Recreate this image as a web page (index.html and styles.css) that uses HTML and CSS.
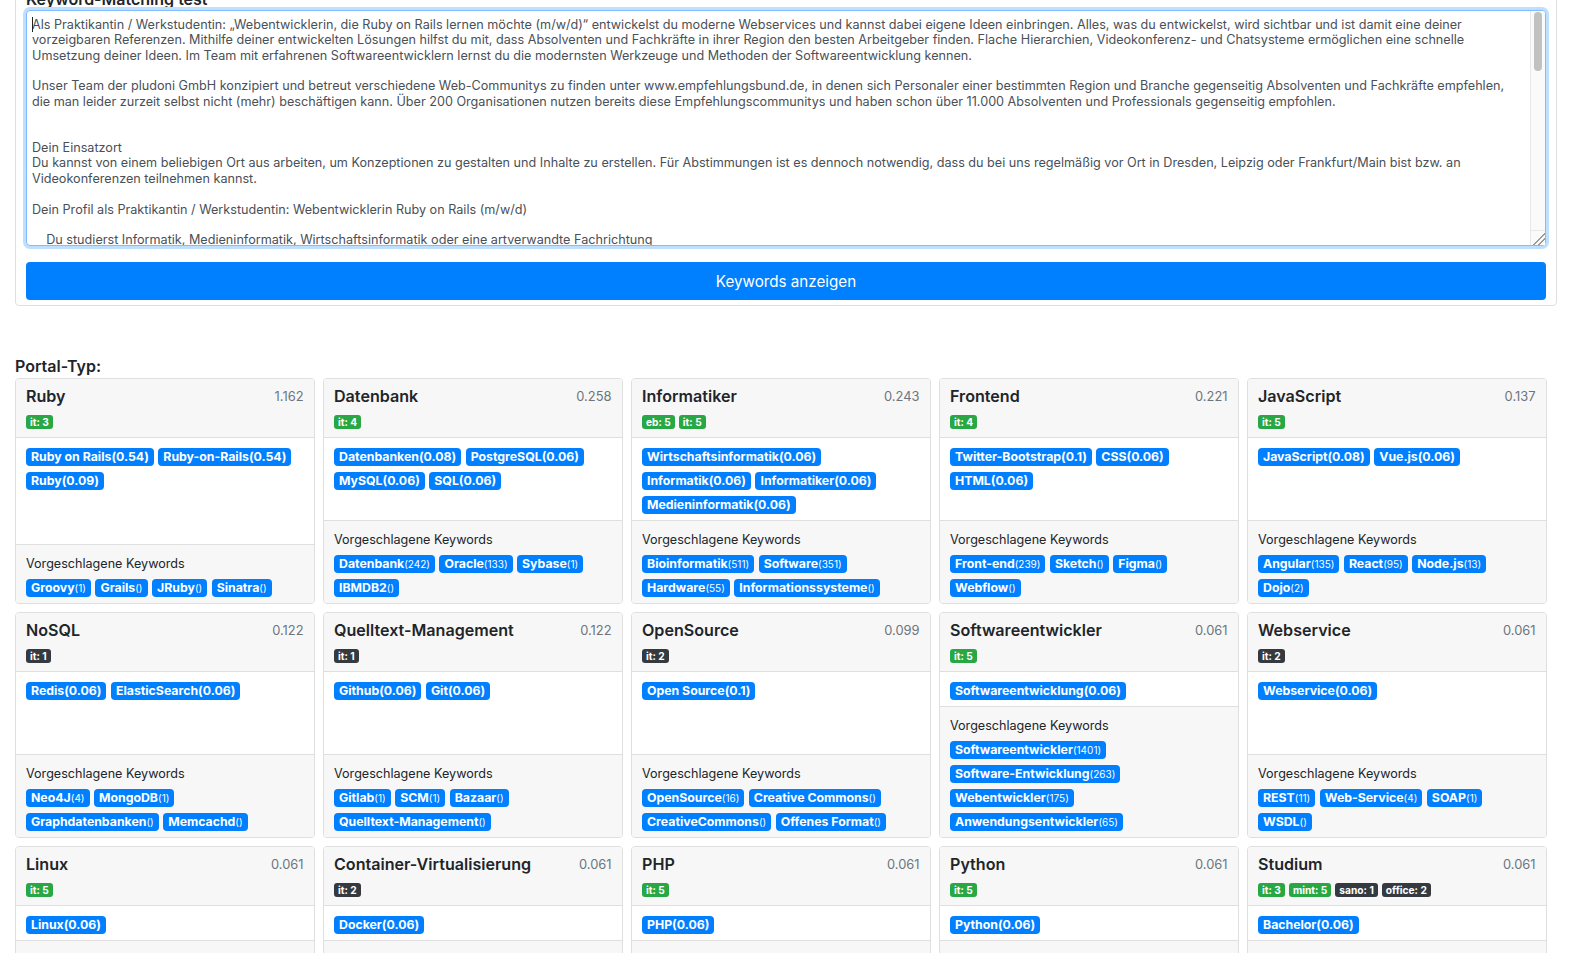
FILE: index.html
```html
<!DOCTYPE html>
<html lang="de">
<head>
<meta charset="utf-8">
<title>Keyword-Matching test</title>
<link rel="stylesheet" href="styles.css">
</head>
<body>
<main class="page">
  <section class="panel">
    <h4 class="panel-title">Keyword-Matching test</h4>
    <div class="area-wrap">
      <textarea class="area" spellcheck="false">Als Praktikantin / Werkstudentin: „Webentwicklerin, die Ruby on Rails lernen möchte (m/w/d)“ entwickelst du moderne Webservices und kannst dabei eigene Ideen einbringen. Alles, was du entwickelst, wird sichtbar und ist damit eine deiner
vorzeigbaren Referenzen. Mithilfe deiner entwickelten Lösungen hilfst du mit, dass Absolventen und Fachkräfte in ihrer Region den besten Arbeitgeber finden. Flache Hierarchien, Videokonferenz- und Chatsysteme ermöglichen eine schnelle
Umsetzung deiner Ideen. Im Team mit erfahrenen Softwareentwicklern lernst du die modernsten Werkzeuge und Methoden der Softwareentwicklung kennen.

Unser Team der pludoni GmbH konzipiert und betreut verschiedene Web-Communitys zu finden unter www.empfehlungsbund.de, in denen sich Personaler einer bestimmten Region und Branche gegenseitig Absolventen und Fachkräfte empfehlen,
die man leider zurzeit selbst nicht (mehr) beschäftigen kann. Über 200 Organisationen nutzen bereits diese Empfehlungscommunitys und haben schon über 11.000 Absolventen und Professionals gegenseitig empfohlen.


Dein Einsatzort
Du kannst von einem beliebigen Ort aus arbeiten, um Konzeptionen zu gestalten und Inhalte zu erstellen. Für Abstimmungen ist es dennoch notwendig, dass du bei uns regelmäßig vor Ort in Dresden, Leipzig oder Frankfurt/Main bist bzw. an
Videokonferenzen teilnehmen kannst.

Dein Profil als Praktikantin / Werkstudentin: Webentwicklerin Ruby on Rails (m/w/d)

    Du studierst Informatik, Medieninformatik, Wirtschaftsinformatik oder eine artverwandte Fachrichtung</textarea>
      <span class="caret"></span>
      <span class="track"><span class="thumb"></span></span>
    </div>
    <button class="submit" type="button">Keywords anzeigen</button>
  </section>

  <h4 class="section-title">Portal-Typ:</h4>

  <div class="grid">
    <article class="card">
      <header class="head"><div class="title-row"><h5>Ruby</h5><span class="score">1.162</span></div><div class="tags"><span class="tag ok">it: 3</span></div></header>
      <div class="body"><span class="kw">Ruby on Rails(0.54)</span><span class="kw">Ruby-on-Rails(0.54)</span><span class="kw">Ruby(0.09)</span></div>
      <footer class="foot"><p>Vorgeschlagene Keywords</p><div class="kws"><span class="kw">Groovy<small>(1)</small></span><span class="kw">Grails<small>()</small></span><span class="kw">JRuby<small>()</small></span><span class="kw">Sinatra<small>()</small></span></div></footer>
    </article>
    <article class="card">
      <header class="head"><div class="title-row"><h5>Datenbank</h5><span class="score">0.258</span></div><div class="tags"><span class="tag ok">it: 4</span></div></header>
      <div class="body"><span class="kw">Datenbanken(0.08)</span><span class="kw">PostgreSQL(0.06)</span><span class="kw">MySQL(0.06)</span><span class="kw">SQL(0.06)</span></div>
      <footer class="foot"><p>Vorgeschlagene Keywords</p><div class="kws"><span class="kw">Datenbank<small>(242)</small></span><span class="kw">Oracle<small>(133)</small></span><span class="kw">Sybase<small>(1)</small></span><span class="kw">IBMDB2<small>()</small></span></div></footer>
    </article>
    <article class="card">
      <header class="head"><div class="title-row"><h5>Informatiker</h5><span class="score">0.243</span></div><div class="tags"><span class="tag ok">eb: 5</span><span class="tag ok">it: 5</span></div></header>
      <div class="body"><span class="kw">Wirtschaftsinformatik(0.06)</span><span class="kw">Informatik(0.06)</span><span class="kw">Informatiker(0.06)</span><span class="kw">Medieninformatik(0.06)</span></div>
      <footer class="foot"><p>Vorgeschlagene Keywords</p><div class="kws"><span class="kw">Bioinformatik<small>(511)</small></span><span class="kw">Software<small>(351)</small></span><span class="kw">Hardware<small>(55)</small></span><span class="kw">Informationssysteme<small>()</small></span></div></footer>
    </article>
    <article class="card">
      <header class="head"><div class="title-row"><h5>Frontend</h5><span class="score">0.221</span></div><div class="tags"><span class="tag ok">it: 4</span></div></header>
      <div class="body"><span class="kw">Twitter-Bootstrap(0.1)</span><span class="kw">CSS(0.06)</span><span class="kw">HTML(0.06)</span></div>
      <footer class="foot"><p>Vorgeschlagene Keywords</p><div class="kws"><span class="kw">Front-end<small>(239)</small></span><span class="kw">Sketch<small>()</small></span><span class="kw">Figma<small>()</small></span><span class="kw">Webflow<small>()</small></span></div></footer>
    </article>
    <article class="card">
      <header class="head"><div class="title-row"><h5>JavaScript</h5><span class="score">0.137</span></div><div class="tags"><span class="tag ok">it: 5</span></div></header>
      <div class="body"><span class="kw">JavaScript(0.08)</span><span class="kw">Vue.js(0.06)</span></div>
      <footer class="foot"><p>Vorgeschlagene Keywords</p><div class="kws"><span class="kw">Angular<small>(135)</small></span><span class="kw">React<small>(95)</small></span><span class="kw">Node.js<small>(13)</small></span><span class="kw">Dojo<small>(2)</small></span></div></footer>
    </article>

    <article class="card">
      <header class="head"><div class="title-row"><h5>NoSQL</h5><span class="score">0.122</span></div><div class="tags"><span class="tag dark">it: 1</span></div></header>
      <div class="body"><span class="kw">Redis(0.06)</span><span class="kw">ElasticSearch(0.06)</span></div>
      <footer class="foot"><p>Vorgeschlagene Keywords</p><div class="kws"><span class="kw">Neo4J<small>(4)</small></span><span class="kw">MongoDB<small>(1)</small></span><span class="kw">Graphdatenbanken<small>()</small></span><span class="kw">Memcachd<small>()</small></span></div></footer>
    </article>
    <article class="card">
      <header class="head"><div class="title-row"><h5>Quelltext-Management</h5><span class="score">0.122</span></div><div class="tags"><span class="tag dark">it: 1</span></div></header>
      <div class="body"><span class="kw">Github(0.06)</span><span class="kw">Git(0.06)</span></div>
      <footer class="foot"><p>Vorgeschlagene Keywords</p><div class="kws"><span class="kw">Gitlab<small>(1)</small></span><span class="kw">SCM<small>(1)</small></span><span class="kw">Bazaar<small>()</small></span><span class="kw">Quelltext-Management<small>()</small></span></div></footer>
    </article>
    <article class="card">
      <header class="head"><div class="title-row"><h5>OpenSource</h5><span class="score">0.099</span></div><div class="tags"><span class="tag dark">it: 2</span></div></header>
      <div class="body"><span class="kw">Open Source(0.1)</span></div>
      <footer class="foot"><p>Vorgeschlagene Keywords</p><div class="kws"><span class="kw">OpenSource<small>(16)</small></span><span class="kw">Creative Commons<small>()</small></span><span class="kw">CreativeCommons<small>()</small></span><span class="kw">Offenes Format<small>()</small></span></div></footer>
    </article>
    <article class="card">
      <header class="head"><div class="title-row"><h5>Softwareentwickler</h5><span class="score">0.061</span></div><div class="tags"><span class="tag ok">it: 5</span></div></header>
      <div class="body"><span class="kw">Softwareentwicklung(0.06)</span></div>
      <footer class="foot"><p>Vorgeschlagene Keywords</p><div class="kws"><span class="kw">Softwareentwickler<small>(1401)</small></span><span class="kw">Software-Entwicklung<small>(263)</small></span><span class="kw">Webentwickler<small>(175)</small></span><span class="kw">Anwendungsentwickler<small>(65)</small></span></div></footer>
    </article>
    <article class="card">
      <header class="head"><div class="title-row"><h5>Webservice</h5><span class="score">0.061</span></div><div class="tags"><span class="tag dark">it: 2</span></div></header>
      <div class="body"><span class="kw">Webservice(0.06)</span></div>
      <footer class="foot"><p>Vorgeschlagene Keywords</p><div class="kws"><span class="kw">REST<small>(11)</small></span><span class="kw">Web-Service<small>(4)</small></span><span class="kw">SOAP<small>(1)</small></span><span class="kw">WSDL<small>()</small></span></div></footer>
    </article>

    <article class="card">
      <header class="head"><div class="title-row"><h5>Linux</h5><span class="score">0.061</span></div><div class="tags"><span class="tag ok">it: 5</span></div></header>
      <div class="body"><span class="kw">Linux(0.06)</span></div>
      <footer class="foot"></footer>
    </article>
    <article class="card">
      <header class="head"><div class="title-row"><h5>Container-Virtualisierung</h5><span class="score">0.061</span></div><div class="tags"><span class="tag dark">it: 2</span></div></header>
      <div class="body"><span class="kw">Docker(0.06)</span></div>
      <footer class="foot"></footer>
    </article>
    <article class="card">
      <header class="head"><div class="title-row"><h5>PHP</h5><span class="score">0.061</span></div><div class="tags"><span class="tag ok">it: 5</span></div></header>
      <div class="body"><span class="kw">PHP(0.06)</span></div>
      <footer class="foot"></footer>
    </article>
    <article class="card">
      <header class="head"><div class="title-row"><h5>Python</h5><span class="score">0.061</span></div><div class="tags"><span class="tag ok">it: 5</span></div></header>
      <div class="body"><span class="kw">Python(0.06)</span></div>
      <footer class="foot"></footer>
    </article>
    <article class="card">
      <header class="head"><div class="title-row"><h5>Studium</h5><span class="score">0.061</span></div><div class="tags"><span class="tag ok">it: 3</span><span class="tag ok">mint: 5</span><span class="tag dark">sano: 1</span><span class="tag dark">office: 2</span></div></header>
      <div class="body"><span class="kw">Bachelor(0.06)</span></div>
      <footer class="foot"></footer>
    </article>
  </div>
</main>
</body>
</html>
```

FILE: styles.css
```css
* { box-sizing: border-box; }
html, body { height: 953px; overflow: hidden; }
body {
  margin: 0;
  background: #fff;
  color: #212529;
  font-family: Inter, "Liberation Sans", sans-serif;
  font-size: 12.6px;
}
.page { margin-top: -21px; padding: 0 14px 0 15px; }
.panel {
  border: 1px solid #dfdfdf;
  border-radius: 4px;
  padding: 10px 10px 5px;
}
.panel-title, .section-title {
  margin: 0;
  font-size: 16px;
  line-height: 18px;
  font-weight: 600;
}
.panel-title { margin-bottom: 2px; }
.area-wrap { position: relative; height: 236px; margin-bottom: 16px; }
.area {
  display: block;
  width: 100%;
  height: 236px;
  padding: 5.7px 5px 5px;
  margin: 0;
  border: 1px solid #80bdff;
  border-radius: 4px;
  box-shadow: 0 0 0 3px #bfdfff;
  outline: none;
  resize: vertical;
  color: #495057;
  background: #fff;
  font-family: Inter, "Liberation Sans", sans-serif;
  font-size: 12.64px;
  line-height: 15.4px;
  white-space: pre;
  overflow: hidden;
}
.area::-webkit-resizer {
  background-color: #fafafa;
  border-top: 1px solid #e8e8e8;
  border-left: 1px solid #e8e8e8;
  background-image: linear-gradient(135deg, transparent 55%, #9a9a9a 55%, #9a9a9a 62%, transparent 62%, transparent 72%, #9a9a9a 72%, #9a9a9a 79%, transparent 79%);
}
.caret {
  position: absolute;
  left: 6px;
  top: 7px;
  width: 1px;
  height: 15px;
  background: #222;
}
.track {
  position: absolute;
  top: 1px;
  right: 1px;
  bottom: 16px;
  width: 15px;
  background: #fafafa;
  border-left: 1px solid #e8e8e8;
  border-radius: 0 3px 0 0;
}
.thumb {
  position: absolute;
  top: 1px;
  right: 3px;
  width: 8px;
  height: 59px;
  border-radius: 4px;
  background: #c1c1c1;
}
.submit {
  display: block;
  width: 100%;
  height: 38px;
  padding: 0;
  border: 0;
  border-radius: 4px;
  background: #007fff;
  color: #fff;
  font-family: Inter, "Liberation Sans", sans-serif;
  font-size: 15.2px;
}
.section-title { margin: 51px 0 3px; }
.grid {
  display: grid;
  grid-template-columns: repeat(5, 299.5px);
  column-gap: 8.5px;
  row-gap: 8px;
}
.card {
  display: flex;
  flex-direction: column;
  border: 1px solid #dfdfdf;
  border-radius: 4px;
  overflow: hidden;
}
.head {
  padding: 7px 10px 8px;
  background: #f7f7f7;
  border-bottom: 1px solid #dfdfdf;
}
.title-row { display: flex; justify-content: space-between; align-items: center; margin-bottom: 8px; }
.title-row h5 { margin: 0; font-size: 16.1px; line-height: 21px; font-weight: 600; }
.score { color: #6c757d; font-size: 12.9px; }
.tags { display: flex; gap: 4px; height: 14px; }
.tag {
  display: block;
  height: 14px;
  padding: 0 4px;
  border-radius: 3px;
  color: #fff;
  font-size: 10.2px;
  line-height: 14px;
  font-weight: 700;
}
.ok { background: #28a745; }
.dark { background: #343a40; }
.body { flex: 1; padding: 10px 10px 0; display: flex; flex-wrap: wrap; align-content: flex-start; }
.foot {
  background: #f7f7f7;
  border-top: 1px solid #dfdfdf;
  padding: 11px 10px 0;
}
.foot:empty { min-height: 60px; }
.foot p { margin: 0 0 7px; font-size: 12.6px; line-height: 16px; }
.kws { display: flex; flex-wrap: wrap; }
.kw {
  display: block;
  height: 18px;
  margin: 0 4.5px 6px 0;
  padding: 0 5px;
  border-radius: 4px;
  background: #007fff;
  color: #fff;
  font-size: 12.3px;
  line-height: 18px;
  font-weight: 700;
  white-space: nowrap;
}
.kw small { font-size: 10px; font-weight: 400; }
```
